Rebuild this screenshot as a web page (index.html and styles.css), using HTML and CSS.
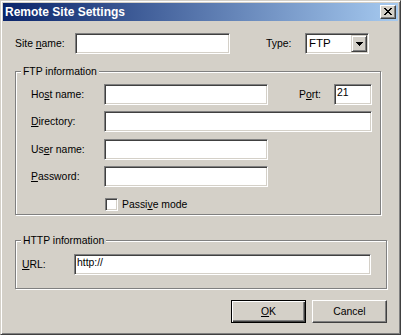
FILE: index.html
```html
<!DOCTYPE html>
<html>
<head>
  <meta charset="UTF-8">
  <title>Remote Site Settings</title>
  <link rel="stylesheet" href="styles.css">
</head>
<body>
  <div class="window">
    <div class="titlebar">
      <span class="title">Remote Site Settings</span>
      <span class="close">
        <svg width="8" height="7" viewBox="0 0 8 7" shape-rendering="crispEdges">
          <path d="M0 0h2v1H0zM6 0h2v1H6zM1 1h2v1H1zM5 1h2v1H5zM2 2h4v1H2zM3 3h2v1H3zM2 4h4v1H2zM1 5h2v1H1zM5 5h2v1H5zM0 6h2v1H0zM6 6h2v1H6z" fill="#000"/>
        </svg>
      </span>
    </div>

    <div class="content">
      <div class="top-row">
        <label class="lbl site-lbl">Site <u>n</u>ame:</label>
        <input type="text" class="edit site-name">
        <label class="lbl type-lbl">Type:</label>
        <div class="combo">
          <span class="combo-text">FTP</span>
          <span class="combo-btn">
            <svg width="7" height="4" viewBox="0 0 7 4" shape-rendering="crispEdges">
              <path d="M0 0h7v1H0zM1 1h5v1H1zM2 2h3v1H2zM3 3h1v1H3z" fill="#000"/>
            </svg>
          </span>
        </div>
      </div>

      <!-- FTP -->
      <div class="group ftp-group">
        <div class="group-title">FTP information</div>
        <div class="field">
          <label class="lbl field-lbl">Ho<u>s</u>t name:</label>
          <input type="text" class="edit short">
          <label class="lbl port-lbl">P<u>o</u>rt:</label>
          <input type="text" class="edit port" value="21">
        </div>
        <div class="field">
          <label class="lbl field-lbl"><u>D</u>irectory:</label>
          <input type="text" class="edit long">
        </div>
        <div class="field field-gap">
          <label class="lbl field-lbl">Us<u>e</u>r name:</label>
          <input type="text" class="edit short">
        </div>
        <div class="field">
          <label class="lbl field-lbl"><u>P</u>assword:</label>
          <input type="password" class="edit short">
        </div>
        <div class="check-row">
          <span class="checkbox"></span>
          <label class="lbl">Passi<u>v</u>e mode</label>
        </div>
      </div>

      <!-- HTTP -->
      <div class="group http-group">
        <div class="group-title">HTTP information</div>
        <div class="field url-field">
          <label class="lbl url-lbl"><u>U</u>RL:</label>
          <input type="text" class="edit url" value="http://">
        </div>
      </div>

      <div class="buttons">
        <button class="btn default"><u>O</u>K</button>
        <button class="btn">Cancel</button>
      </div>
    </div>
  </div>
</body>
</html>
```

FILE: styles.css
```css
body {
  margin: 0;
  font-family: 'Liberation Sans', Arial, sans-serif;
  font-size: 10.4px;
  color: #000;
  background: #d4d0c8;
}
.window {
  width: 401px;
  height: 335px;
  box-sizing: border-box;
  border: 1px solid;
  border-color: #d4d0c8 #404040 #404040 #d4d0c8;
  box-shadow: inset 1px 1px 0 #fff, inset -1px -1px 0 #808080;
  padding: 2px;
  background: #d4d0c8;
}

/* title bar */
.titlebar {
  height: 18px;
  display: flex;
  align-items: center;
  justify-content: space-between;
  padding: 0 2px;
  background: linear-gradient(to right, #0a246a, #a6caf0);
}
.title {
  color: #fff;
  font-weight: bold;
  font-size: 12px;
  line-height: 18px;
}
.close {
  width: 16px;
  height: 14px;
  box-sizing: border-box;
  display: flex;
  align-items: center;
  justify-content: center;
  background: #d4d0c8;
  border: 1px solid;
  border-color: #fff #404040 #404040 #fff;
  box-shadow: inset -1px -1px 0 #808080;
  padding: 0 1px 1px 0;
}

.content {
  padding: 12px 0 0 12px;
}
.lbl {
  white-space: nowrap;
}
u {
  text-underline-offset: 1px;
}

/* edit boxes */
.edit {
  height: 21px;
  box-sizing: border-box;
  margin: 0;
  border: 1px solid;
  border-color: #808080 #fff #fff #808080;
  box-shadow: inset 1px 1px 0 #404040, inset -1px -1px 0 #d4d0c8;
  background: #fff;
  padding: 1px 2px 5px 2px;
  font-family: inherit;
  font-size: 10.4px;
  outline: none;
}

.top-row {
  display: flex;
  align-items: center;
  height: 21px;
}
.site-lbl {
  width: 60px;
}
.site-name {
  width: 155px;
}
.type-lbl {
  margin-left: 36px;
  width: 39px;
}
.combo {
  width: 64px;
  height: 21px;
  box-sizing: border-box;
  display: flex;
  align-items: stretch;
  border: 1px solid;
  border-color: #808080 #fff #fff #808080;
  box-shadow: inset 1px 1px 0 #404040, inset -1px -1px 0 #d4d0c8;
  background: #fff;
  padding: 1px;
}
.combo-text {
  flex: 1;
  font-size: 11.5px;
  line-height: 17px;
  padding-left: 2px;
}
.combo-btn {
  width: 16px;
  box-sizing: border-box;
  display: flex;
  align-items: center;
  justify-content: center;
  background: #d4d0c8;
  border: 1px solid;
  border-color: #d4d0c8 #404040 #404040 #d4d0c8;
  box-shadow: inset 1px 1px 0 #fff, inset -1px -1px 0 #808080;
}

/* group boxes */
.group {
  box-sizing: border-box;
  border: 1px solid #808080;
  box-shadow: 1px 1px 0 #fff, inset 1px 1px 0 #fff;
}
.ftp-group {
  width: 366px;
  height: 144px;
  margin-top: 17px;
}
.http-group {
  width: 372px;
  height: 49px;
  margin-top: 25px;
}
.group-title {
  width: fit-content;
  margin: -7px 0 0 5px;
  padding: 0 2px;
  line-height: 13px;
  background: #d4d0c8;
}

.field {
  display: flex;
  align-items: center;
  height: 21px;
  margin: 6px 0 0 15px;
}
.ftp-group .field:first-of-type {
  margin-top: 3px;
}
.field-gap {
  margin-top: 7px;
}
.field-lbl {
  width: 73px;
}
.short {
  width: 164px;
}
.long {
  width: 268px;
}
.port-lbl {
  margin-left: 31px;
  width: 35px;
}
.port {
  width: 38px;
}

.check-row {
  display: flex;
  align-items: center;
  margin: 11px 0 0 89px;
}
.checkbox {
  width: 13px;
  height: 13px;
  box-sizing: border-box;
  border: 1px solid;
  border-color: #808080 #fff #fff #808080;
  box-shadow: inset 1px 1px 0 #404040, inset -1px -1px 0 #d4d0c8;
  background: #fff;
  margin-right: 4px;
}

.url-field {
  margin: 7px 0 0 6px;
}
.url-lbl {
  width: 52px;
}
.url {
  width: 297px;
}

/* buttons */
.buttons {
  width: 372px;
  display: flex;
  justify-content: flex-end;
  gap: 6px;
  margin-top: 11px;
}
.btn {
  width: 75px;
  height: 23px;
  box-sizing: border-box;
  margin: 0;
  padding: 0;
  font-family: inherit;
  font-size: 10.4px;
  color: #000;
  background: #d4d0c8;
  border: 1px solid;
  border-color: #fff #404040 #404040 #fff;
  box-shadow: inset -1px -1px 0 #808080, inset 1px 1px 0 #d4d0c8;
}
.btn.default {
  border-color: #000;
  box-shadow: inset 1px 1px 0 #fff, inset -1px -1px 0 #404040, inset -2px -2px 0 #808080;
}
```
